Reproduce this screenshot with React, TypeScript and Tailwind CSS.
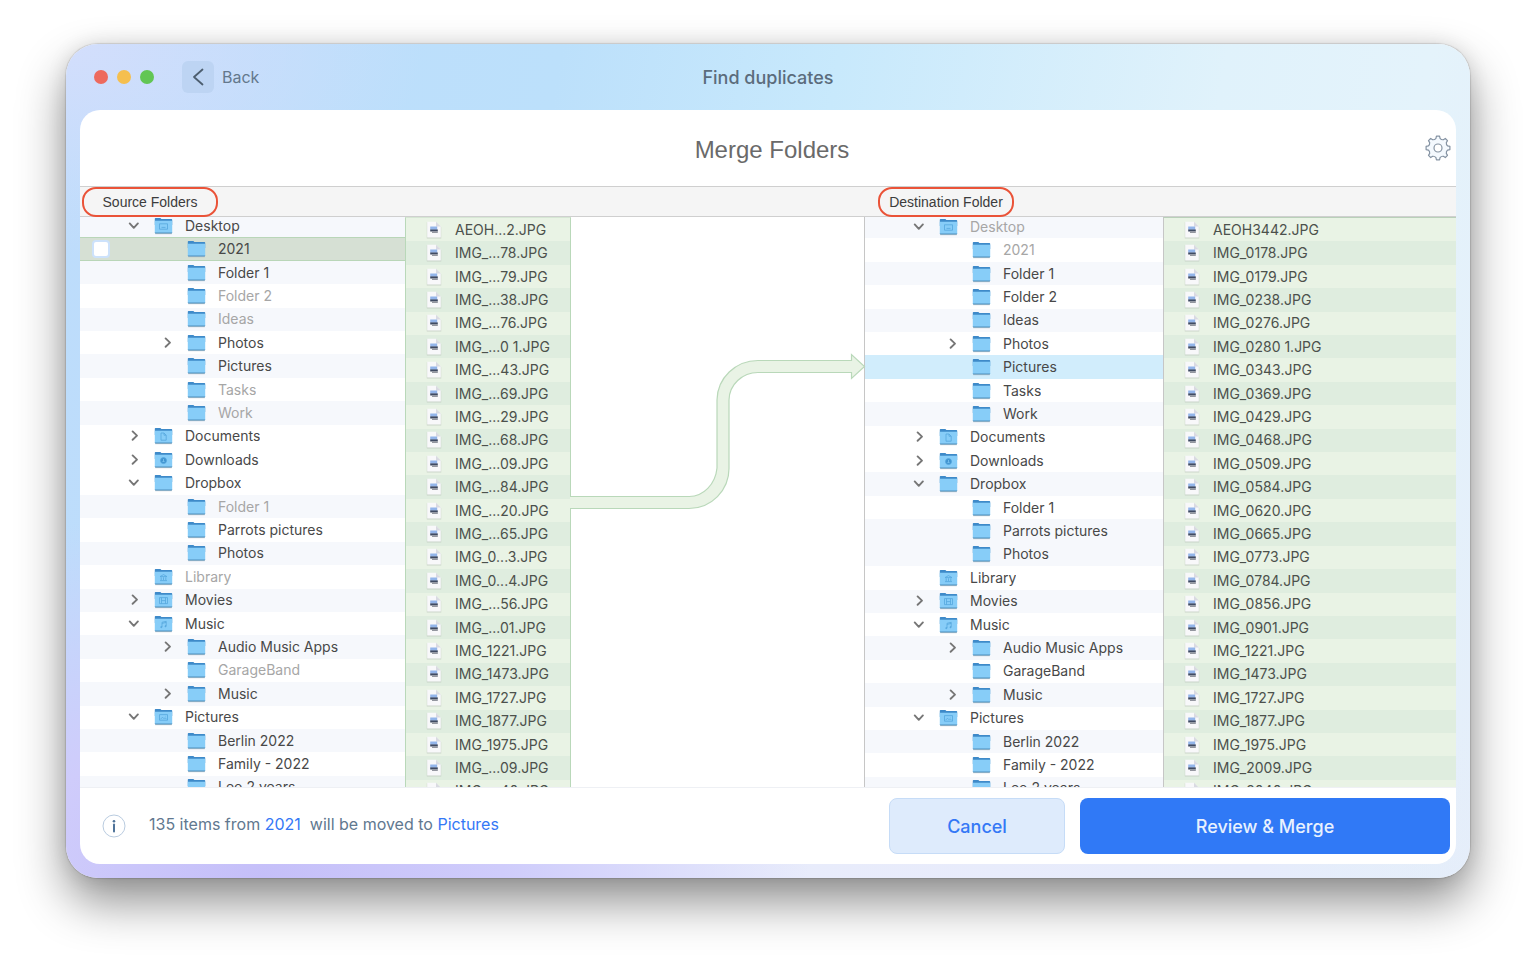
import { ReactNode } from "react";

type Glyph = "desktop" | "document" | "download" | "library" | "movie" | "music" | "picture";
type Arrow = "open" | "closed";

type Node = {
  name: string;
  level: 1 | 2;
  arrow?: Arrow;
  glyph?: Glyph;
};

type Tree = {
  label: string;
  muted: number[];
  striped: number[];
};

const nodes: Node[] = [
  { name: "Desktop", level: 1, arrow: "open", glyph: "desktop" },
  { name: "2021", level: 2 },
  { name: "Folder 1", level: 2 },
  { name: "Folder 2", level: 2 },
  { name: "Ideas", level: 2 },
  { name: "Photos", level: 2, arrow: "closed" },
  { name: "Pictures", level: 2 },
  { name: "Tasks", level: 2 },
  { name: "Work", level: 2 },
  { name: "Documents", level: 1, arrow: "closed", glyph: "document" },
  { name: "Downloads", level: 1, arrow: "closed", glyph: "download" },
  { name: "Dropbox", level: 1, arrow: "open" },
  { name: "Folder 1", level: 2 },
  { name: "Parrots pictures", level: 2 },
  { name: "Photos", level: 2 },
  { name: "Library", level: 1, glyph: "library" },
  { name: "Movies", level: 1, arrow: "closed", glyph: "movie" },
  { name: "Music", level: 1, arrow: "open", glyph: "music" },
  { name: "Audio Music Apps", level: 2, arrow: "closed" },
  { name: "GarageBand", level: 2 },
  { name: "Music", level: 2, arrow: "closed" },
  { name: "Pictures", level: 1, arrow: "open", glyph: "picture" },
  { name: "Berlin 2022", level: 2 },
  { name: "Family - 2022", level: 2 },
  { name: "Leo 2 years", level: 2 },
];

const source: Tree = {
  label: "Source Folders",
  muted: [3, 4, 7, 8, 12, 15, 19],
  striped: [0, 2, 4, 6, 8, 12, 14, 16, 18, 20, 22, 24],
};

const destination: Tree = {
  label: "Destination Folder",
  muted: [0, 1],
  striped: [0, 2, 4, 8, 11, 13, 14, 16, 18, 20, 22, 24],
};

const sourceFiles = [
  "AEOH...2.JPG", "IMG_...78.JPG", "IMG_...79.JPG", "IMG_...38.JPG", "IMG_...76.JPG",
  "IMG_...0 1.JPG", "IMG_...43.JPG", "IMG_...69.JPG", "IMG_...29.JPG", "IMG_...68.JPG",
  "IMG_...09.JPG", "IMG_...84.JPG", "IMG_...20.JPG", "IMG_...65.JPG", "IMG_0...3.JPG",
  "IMG_0...4.JPG", "IMG_...56.JPG", "IMG_...01.JPG", "IMG_1221.JPG", "IMG_1473.JPG",
  "IMG_1727.JPG", "IMG_1877.JPG", "IMG_1975.JPG", "IMG_...09.JPG", "IMG_...40.JPG",
];

const destinationFiles = [
  "AEOH3442.JPG", "IMG_0178.JPG", "IMG_0179.JPG", "IMG_0238.JPG", "IMG_0276.JPG",
  "IMG_0280 1.JPG", "IMG_0343.JPG", "IMG_0369.JPG", "IMG_0429.JPG", "IMG_0468.JPG",
  "IMG_0509.JPG", "IMG_0584.JPG", "IMG_0620.JPG", "IMG_0665.JPG", "IMG_0773.JPG",
  "IMG_0784.JPG", "IMG_0856.JPG", "IMG_0901.JPG", "IMG_1221.JPG", "IMG_1473.JPG",
  "IMG_1727.JPG", "IMG_1877.JPG", "IMG_1975.JPG", "IMG_2009.JPG", "IMG_2040.JPG",
];

const glyphs: Record<Glyph, ReactNode> = {
  desktop: <path d="M5.5 6.8h8v5.4h-8zM7.5 10.4h4" />,
  document: <path d="M7 6h3l2.2 2.2v5H7zM10 6v2.2h2.2" />,
  download: (
    <>
      <circle cx="9.5" cy="9.6" r="3" fill="#3f92cf" />
      <path d="M9.5 7.9v3M8.3 9.9l1.2 1.2 1.2-1.2" stroke="#7cc6f3" />
    </>
  ),
  library: <path d="M6 8.6l3.5-2 3.5 2zM7.2 9.3v2.8M9.5 9.3v2.8M11.8 9.3v2.8M6 12.6h7" />,
  movie: <path d="M5.5 6.6h8v6h-8zM7.5 6.6v6M11.5 6.6v6M7.5 9.6h4" />,
  music: (
    <>
      <path d="M8 12V7.3l4.2-1v4.8M8 8.4l4.2-1" />
      <circle cx="7.3" cy="12.1" r=".6" fill="#56a7dd" />
      <circle cx="11.5" cy="11.2" r=".6" fill="#56a7dd" />
    </>
  ),
  picture: <path d="M5.5 6.6h8v5.6h-8zM6.5 11.2l2-2 1.5 1.5 1-1 1.5 1.5M11.3 8.3h.4" />,
};

function FolderIcon({ glyph }: { glyph?: Glyph }) {
  return (
    <svg viewBox="0 0 19 18" className="h-[18px] w-[19px] shrink-0" aria-hidden="true">
      <path d="M1.2 16.6h16.6" stroke="#8a98a5" strokeWidth="1" />
      <path d="M.8 2c0-.6.4-1 1-1h4c.5 0 .8.1 1.1.5l.5.6h9.8c.6 0 1 .4 1 1V8H.8z" fill="#3e8ac9" />
      <path d="M.8 3.7h17.4v11.5c0 .6-.4 1-1 1H1.8c-.6 0-1-.4-1-1z" fill="#87cdf8" />
      <path d="M.8 15h17.4v.2c0 .6-.4 1-1 1H1.8c-.6 0-1-.4-1-1z" fill="#6aaedb" />
      {glyph && (
        <g fill="none" stroke="#56a7dd" strokeWidth=".8">
          {glyphs[glyph]}
        </g>
      )}
    </svg>
  );
}

function FileIcon() {
  return (
    <svg viewBox="0 0 16 18" className="h-[18px] w-4 shrink-0" aria-hidden="true">
      <path d="M.8 1.2h9.2l5.2 5v11.2H.8z" fill="#bfc9bf" opacity=".7" />
      <path d="M1.2.8h8.8l4.8 4.8v11H1.2z" fill="#f8f8fa" />
      <path d="M10 .8v4.8h4.8z" fill="#d9dae1" />
      <path d="M4.2 5.5h7v3.2h-7z" fill="#93b5ea" />
      <path d="M4.2 8.4h7.6v2.1H4.2z" fill="#3f4a62" />
      <path d="M6 10.5h5.8v1.5H6z" fill="#93969f" />
    </svg>
  );
}

function Chevron({ dir }: { dir: "down" | "right" }) {
  return (
    <svg viewBox="0 0 12 12" className="size-3" fill="none" stroke="#767676" strokeWidth="1.9" strokeLinecap="round" strokeLinejoin="round" aria-hidden="true">
      <path d={dir === "down" ? "M1.7 3.4L5.8 7.8l4.1-4.4" : "M4.6 1.4l4.4 4.2-4.4 4.2"} />
    </svg>
  );
}

function gearPath() {
  const teeth = 8;
  const step = (Math.PI * 2) / teeth;
  const at = (r: number, a: number) => `${(14 + r * Math.sin(a)).toFixed(2)} ${(14 - r * Math.cos(a)).toFixed(2)}`;
  let d = "";
  for (let i = 0; i < teeth; i++) {
    const a = i * step;
    d += `${i === 0 ? "M" : "L"}${at(12, a - 0.13)}L${at(12, a + 0.13)}L${at(9.9, a + 0.21)}`;
    d += `Q${at(8.7, a + step / 2)} ${at(9.9, a + step - 0.21)}`;
  }
  return `${d}Z`;
}

function GearIcon() {
  return (
    <svg viewBox="0 0 28 28" className="size-7" fill="#f4f9fe" stroke="#8593a3" strokeWidth="1.2" strokeLinejoin="round" aria-hidden="true">
      <path d={gearPath()} />
      <circle cx="14" cy="14" r="4" fill="#fff" />
    </svg>
  );
}

function FolderTree({ tree, selectable }: { tree: Tree; selectable?: boolean }) {
  return (
    <ul aria-label={tree.label} className={`flex h-[585px] flex-col ${selectable ? "-mt-[3px]" : "-mt-[2px]"}`}>
      {nodes.map((node, i) => {
        let bg = tree.striped.includes(i) ? "bg-[#f6f8fc]" : "bg-white";
        if (selectable && i === 1) bg = "bg-[#d6e0d4] shadow-[inset_0_1px_#b9d6b8,inset_0_-1px_#b9d6b8]";
        if (!selectable && i === 6) bg = "bg-[#d1edfc]";
        return (
          <li key={i} className={`flex min-h-0 flex-1 items-center ${bg}`}>
            <span className="flex w-12 shrink-0 pl-3">
              {selectable && i === 1 && (
                <input
                  type="checkbox"
                  aria-label="Select 2021"
                  className="size-[18px] appearance-none rounded border-2 border-[#cde2fb] bg-white"
                />
              )}
            </span>
            {node.level === 2 && <span className="w-[33px] shrink-0" />}
            <span className="w-[26px] shrink-0">
              {node.arrow && (
                <button type="button" aria-label={`Toggle ${node.name}`} className="block">
                  <Chevron dir={node.arrow === "open" ? "down" : "right"} />
                </button>
              )}
            </span>
            <FolderIcon glyph={node.glyph} />
            <span className={`ml-3 truncate ${tree.muted.includes(i) ? "text-[#a6a6a6]" : "text-[#484848]"}`}>
              {node.name}
            </span>
          </li>
        );
      })}
    </ul>
  );
}

function FileList({ files }: { files: string[] }) {
  return (
    <ul className="flex h-[585px] flex-col">
      {files.map((file, i) => (
        <li key={i} className={`flex min-h-0 flex-1 items-center pl-5 ${i % 2 ? "bg-[#dfeddf]" : "bg-[#e9f3e5]"}`}>
          <FileIcon />
          <span className="ml-[13px] truncate text-[#4c514c]">{file}</span>
        </li>
      ))}
    </ul>
  );
}

function Caption({ children, className }: { children: string; className: string }) {
  return (
    <h2 className={`z-10 flex h-[30px] items-center justify-center rounded-[14px] border-2 border-[#ea5338] font-['Liberation_Sans',sans-serif] text-[#3c3c3c] ${className}`}>
      {children}
    </h2>
  );
}

export default function App() {
  return (
    <div className="min-h-screen bg-white px-[66px] pt-11 pb-[87px] font-[Inter,sans-serif] text-sm">
      <main className="rounded-[32px] bg-[radial-gradient(ellipse_at_14%_100%,#c5bff9_0%,#cfccfb_14%,transparent_32%),radial-gradient(ellipse_at_60%_110%,#e9ecfb_0%,#e6ebfb_30%,transparent_50%),radial-gradient(ellipse_at_0%_0%,#d3defc_0%,transparent_18%),linear-gradient(100deg,#bddcfb_0%,#bce0fb_32%,#c8e9fc_50%,#e0f2fb_75%,#e4f3fb_88%,#e5eefa_100%)] px-[14px] pb-[14px] shadow-[0_0_1px_1px_rgba(0,0,0,0.12),0_0_20px_0_rgba(0,0,0,0.1),0_24px_48px_rgba(0,0,0,0.44)]">
        <header className="grid h-[66px] grid-cols-3 items-center">
          <div className="flex items-center pl-[14px]">
            <div className="flex gap-[9px]">
              <button type="button" aria-label="Close" className="size-[14px] rounded-full bg-[#ed6a5e]" />
              <button type="button" aria-label="Minimize" className="size-[14px] rounded-full bg-[#f5bf4f]" />
              <button type="button" aria-label="Zoom" className="size-[14px] rounded-full bg-[#62c654]" />
            </div>
            <button type="button" className="ml-7 flex items-center gap-2 text-base text-[#64788c]">
              <span className="flex size-8 items-center justify-center rounded-md bg-[#bdd4f3]">
                <svg viewBox="0 0 12 18" className="h-[18px] w-3" fill="none" stroke="#4c5d6e" strokeWidth="1.8" strokeLinecap="round" strokeLinejoin="round" aria-hidden="true">
                  <path d="M10.5 1.5L2 9l8.500 7.5" />
                </svg>
              </span>
              Back
            </button>
          </div>
          <h1 className="pt-px text-center text-lg font-medium text-[#5b6c7c]">Find duplicates</h1>
        </header>

        <section className="overflow-hidden rounded-[20px] bg-white">
          <div className="grid h-[76px] grid-cols-[1fr_auto_1fr] items-center pl-2">
            <h2 className="col-start-2 pt-1 font-['Liberation_Sans',sans-serif] text-2xl text-[#6a6a6a]">Merge Folders</h2>
            <button type="button" aria-label="Settings" className="mr-1 justify-self-end">
              <GearIcon />
            </button>
          </div>

          <div className="grid h-[31px] grid-cols-[784fr_592fr] border-y border-[#cfcfcf] bg-[#f5f5f5]">
            <Caption className="ml-[2px] w-[136px]">{source.label}</Caption>
            <Caption className="ml-[14px] w-[136px]">{destination.label}</Caption>
          </div>

          <div className="grid h-[570px] grid-cols-[325fr_166fr_293fr_299fr_293fr] overflow-hidden">
            <div className="overflow-hidden">
              <FolderTree tree={source} selectable />
            </div>
            <div className="overflow-hidden border-x border-t border-[#b9d8b9] border-t-[#d5e6d3]">
              <FileList files={sourceFiles} />
            </div>
            <svg viewBox="0 0 293 570" className="z-10 -ml-px h-full w-full overflow-visible" aria-hidden="true">
              <path
                d="M0 279.5H119A28 32 0 0 0 147 251V183A41 40 0 0 1 188 143.5H281.5V137.5L294.5 149.5L281.5 161.5V155.5H188A29 28 0 0 0 159 183V251A40 40 0 0 1 119 291.5H0"
                fill="#e9f3e5"
                stroke="#b9d8b9"
                strokeWidth="1.2"
              />
            </svg>
            <div className="overflow-hidden border-l border-[#c6c6c6]">
              <FolderTree tree={destination} />
            </div>
            <div className="overflow-hidden border-t border-l border-t-[#b9d0b9] border-l-[#c6c6c6]">
              <FileList files={destinationFiles} />
            </div>
          </div>

          <footer className="flex h-[77px] items-center border-t border-[#eef0f4] pr-[6px] pl-[22px]">
            <svg viewBox="0 0 24 24" className="size-6 shrink-0" aria-hidden="true">
              <circle cx="12" cy="12" r="11" fill="none" stroke="#b9cbdf" strokeWidth="1" />
              <circle cx="12" cy="7.3" r="1.3" fill="#4f7399" />
              <path d="M12 10.5v7" stroke="#4f7399" strokeWidth="2" strokeLinecap="round" />
            </svg>
            <p className="ml-[23px] pb-1 text-base whitespace-pre text-[#61788f]">
              135 items from <a href="#2021" className="text-[#3478f6]">2021</a>
              {"  will be moved to "}
              <a href="#pictures" className="text-[#3478f6]">Pictures</a>
            </p>
            <button type="button" className="ml-auto h-14 w-[176px] rounded-lg border border-[#c6dcf7] bg-[#deebfc] pt-px text-lg font-medium text-[#3478f6]">
              Cancel
            </button>
            <button type="button" className="ml-[15px] h-14 w-[370px] rounded-lg bg-[#3079f6] pt-px text-lg font-medium text-[#e8f1fe]">
              Review &amp; Merge
            </button>
          </footer>
        </section>
      </main>
    </div>
  );
}
